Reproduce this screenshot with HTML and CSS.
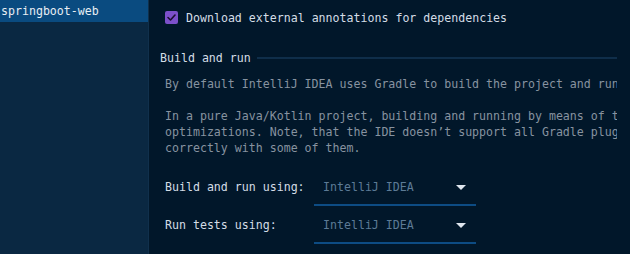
FILE: index.html
```html
<!DOCTYPE html>
<html>
<head>
    <meta charset="utf-8">
    <title>Gradle settings</title>
    <link rel="stylesheet" href="styles.css">
</head>
<body>
    <div class="window">
        <aside class="sidebar">
            <div class="project selected">springboot-web</div>
        </aside>
        <main class="settings">
            <label class="check-row">
                <span class="checkbox">
                    <svg width="13" height="13" viewBox="0 0 13 13">
                        <path d="M3 6.5 L5.5 9 L10 4" fill="none" stroke="#1b1030" stroke-width="1.6" stroke-linecap="round" stroke-linejoin="round"/>
                    </svg>
                </span>
                <span>Download external annotations for dependencies</span>
            </label>

            <div class="section-title">
                <span>Build and run</span>
                <div class="rule"></div>
            </div>

            <div class="note">
                <p>By default IntelliJ IDEA uses Gradle to build the project and run the tasks.</p>
                <p>In a pure Java/Kotlin project, building and running by means of the IDE might be faster, thanks to<br>optimizations. Note, that the IDE doesn’t support all Gradle plugins and the project might not be built<br>correctly with some of them.</p>
            </div>

            <div class="field">
                <span class="field-label">Build and run using:</span>
                <div class="combo">
                    <span>IntelliJ IDEA</span>
                    <span class="arrow"></span>
                </div>
            </div>
            <div class="field">
                <span class="field-label">Run tests using:</span>
                <div class="combo">
                    <span>IntelliJ IDEA</span>
                    <span class="arrow"></span>
                </div>
            </div>
        </main>
    </div>
</body>
</html>
```

FILE: styles.css
```css
html, body {
    margin: 0;
    padding: 0;
    height: 100%;
}

body {
    font-family: "DejaVu Sans Mono", "Liberation Mono", monospace;
    font-size: 11.6px;
    color: #d4dde6;
    background: #01172a;
    overflow: hidden;
}

.window {
    display: flex;
    height: 254px;
}

.sidebar {
    width: 148px;
    flex-shrink: 0;
    background: #0a2842;
    border-right: 1px solid #10304c;
}

.project {
    height: 22px;
    line-height: 22px;
    padding-left: 1px;
    white-space: nowrap;
}

.project.selected {
    background: #0a4b80;
    color: #e8eef4;
}

.settings {
    width: 457px;
    flex-shrink: 0;
    padding: 11px 0 0 11px;
    overflow: hidden;
    white-space: nowrap;
}

.check-row {
    display: flex;
    align-items: center;
    gap: 8px;
    margin-left: 5px;
    height: 13px;
}

.checkbox {
    width: 13px;
    height: 13px;
    border-radius: 2px;
    background: #7c50c9;
    display: flex;
}

.section-title {
    display: flex;
    align-items: center;
    gap: 6px;
    margin-top: 27px;
    height: 14px;
}

.rule {
    flex: 1;
    height: 2px;
    background: #0f2e4a;
}

.note {
    color: #8793a0;
    margin-left: 5px;
    margin-top: 11px;
}

.note p {
    margin: 0 0 16px 0;
    line-height: 16px;
}

.note p:last-child {
    margin-bottom: 0;
}

.field {
    display: flex;
    align-items: flex-start;
    margin-left: 5px;
    margin-top: 24px;
}

.field + .field {
    margin-top: 12px;
}

.field-label {
    width: 149px;
    line-height: 14px;
}

.combo {
    width: 162px;
    height: 24px;
    box-sizing: content-box;
    display: flex;
    justify-content: space-between;
    align-items: flex-start;
    padding: 0 10px 0 9px;
    box-sizing: border-box;
    height: 26px;
    border-bottom: 2px solid #0d4c84;
    color: #5d7b96;
    line-height: 14px;
}

.arrow {
    width: 0;
    height: 0;
    margin-top: 5px;
    border-left: 5px solid transparent;
    border-right: 5px solid transparent;
    border-top: 5px solid #dfe6ee;
}
```
